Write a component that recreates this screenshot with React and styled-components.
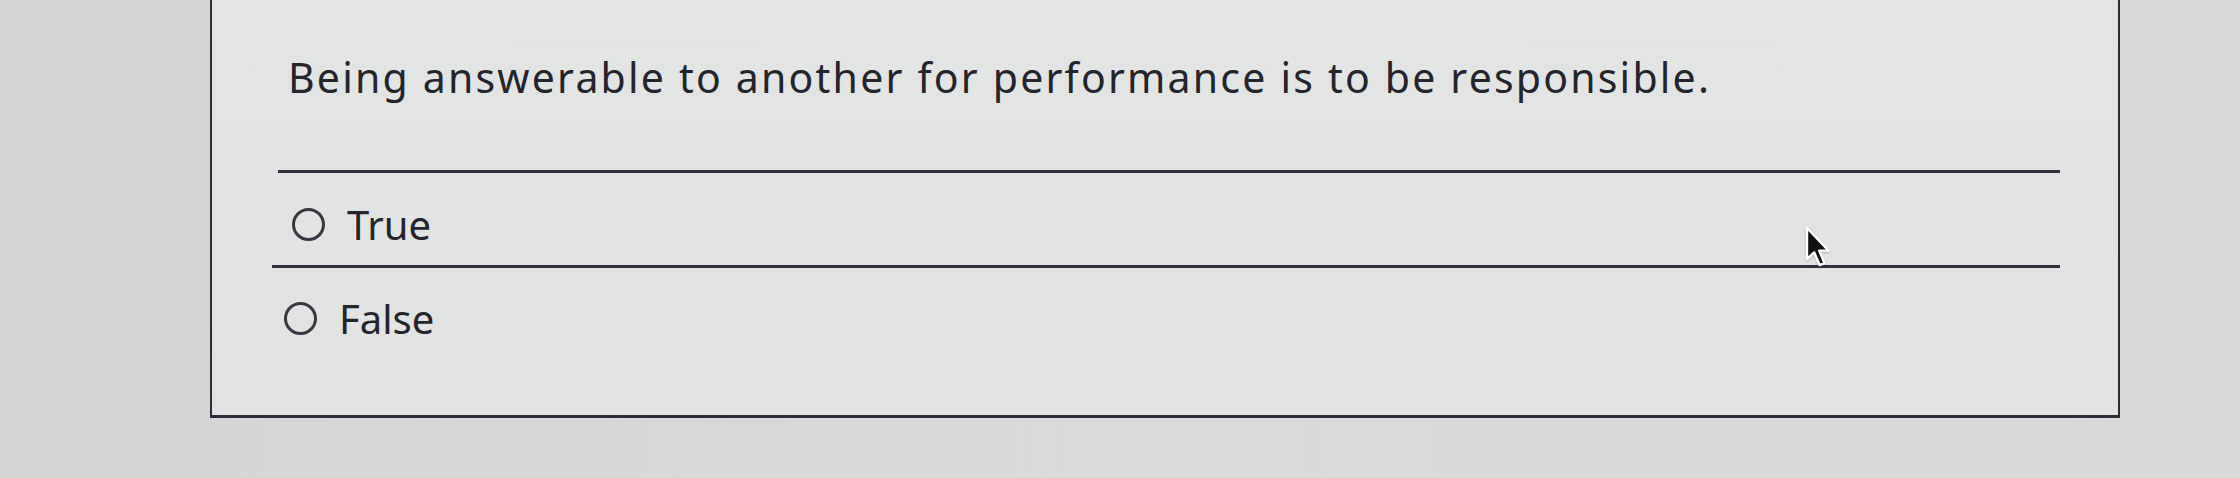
import React from "react"
import styled, { createGlobalStyle } from "styled-components"

const GlobalStyle = createGlobalStyle`
  html, body {
    margin: 0;
    padding: 0;
    background: #d7d9d8;
  }
  * {
    box-sizing: border-box;
  }
`

const Page = styled.main`
  position: relative;
  width: 2240px;
  height: 478px;
  overflow: hidden;
  padding-left: 210px;
  background: linear-gradient(90deg, #d4d6d5 0%, #dadcdb 50%, #d8dad9 100%);
  font-family: "Noto Sans", "DejaVu Sans", sans-serif;
  color: #24242c;
`

const Card = styled.section`
  width: 1910px;
  height: 418px;
  padding: 54px 58px 0 66px;
  background: linear-gradient(180deg, #e3e5e4 0%, #e1e3e2 100%);
  border: 2px solid #2c2c38;
  border-top: none;
  border-bottom-width: 3px;
`

const Question = styled.h1`
  margin: 0 0 70px 10px;
  font-size: 41px;
  line-height: 46px;
  font-weight: 400;
  letter-spacing: 2.2px;
  white-space: nowrap;
`

const Options = styled.div`
  display: flex;
  flex-direction: column;
`

const Option = styled.label`
  display: flex;
  align-items: center;
  gap: 22px;
  padding: ${(p) => p.$pad};
  margin-left: ${(p) => p.$indent}px;
  border-top: 3px solid #30303a;
  font-size: 40px;
  line-height: 32px;
`

const Radio = styled.span`
  flex: none;
  width: 33px;
  height: 33px;
  border: 3px solid #383842;
  border-radius: 50%;
`

const Cursor = styled.svg`
  position: absolute;
  left: 1805px;
  top: 226px;
  width: 26px;
  height: 42px;
  filter: drop-shadow(0 1px 1px rgba(0, 0, 0, 0.25));
`

const options = [
  { label: "True", pad: "35px 0 24px 14px", indent: 0 },
  { label: "False", pad: "34px 0 0 12px", indent: -6 },
]

export default function App() {
  return (
    <>
      <GlobalStyle />
      <Page>
        <Card>
          <Question>
            Being answerable to another for performance is to be responsible.
          </Question>
          <Options>
            {options.map((o) => (
              <Option key={o.label} $pad={o.pad} $indent={o.indent}>
                <Radio />
                {o.label}
              </Option>
            ))}
          </Options>
        </Card>
        <Cursor viewBox="0 0 13 21">
          <path
            d="M1 1 L1 16.5 L4.6 13.2 L7.4 19.6 L9.8 18.6 L7.1 12.3 L11.8 12.3 Z"
            fill="#111"
            stroke="#fff"
            strokeWidth="1.2"
            strokeLinejoin="round"
          />
        </Cursor>
      </Page>
    </>
  )
}
